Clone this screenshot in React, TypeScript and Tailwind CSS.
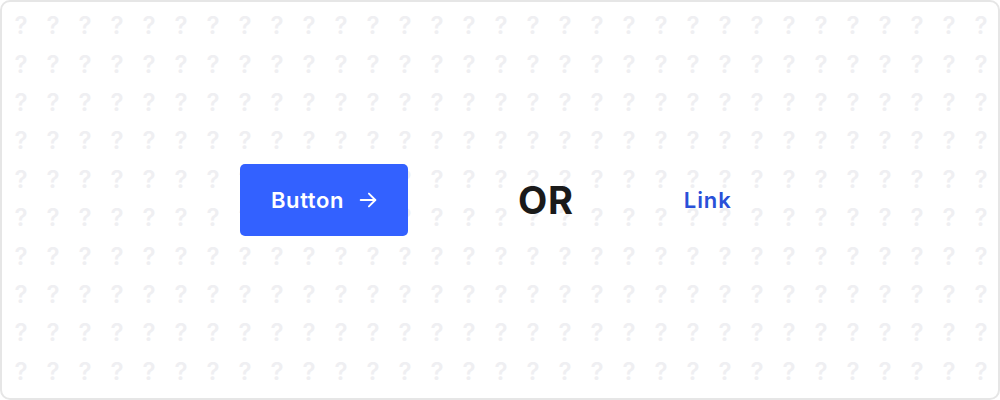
import React from "react";

const rows = Array.from({ length: 10 });
const cols = Array.from({ length: 31 });

export default function App() {
  return (
    <div
      className="w-[1000px] h-[400px] bg-white"
      style={{ fontFamily: "Inter, 'Noto Sans', sans-serif" }}
    >
      <div className="relative w-full h-full border-2 border-[#e6e6e6] rounded-[10px] overflow-hidden">
        <div className="absolute inset-0 flex flex-col pt-[5px] pl-[3px] select-none pointer-events-none">
          {rows.map((_, r) => (
            <div key={r} className="flex h-[38.4px] shrink-0 items-center">
              {cols.map((_, c) => (
                <span
                  key={c}
                  className="w-[32px] shrink-0 text-center text-[24px] font-semibold leading-none text-[#efeff2]"
                >
                  ?
                </span>
              ))}
            </div>
          ))}
        </div>
        <div className="relative flex h-full items-center pl-[238px]">
          <button className="flex h-[72px] w-[168px] items-center justify-center gap-[13px] rounded-[5px] bg-[#3361ff] pl-[2px] text-[22px] font-semibold tracking-[0.6px] text-white">
            <span>Button</span>
            <svg width="22" height="22" viewBox="0 0 24 24" fill="none" stroke="currentColor" strokeWidth="2" strokeLinecap="round" strokeLinejoin="round">
              <path d="M4 12h16" />
              <path d="m13 5 7 7-7 7" />
            </svg>
          </button>
          <span className="ml-[110px] text-[38px] font-bold leading-none tracking-[0.8px] text-[#1a1a1a]">OR</span>
          <span className="ml-[110px] text-[22px] font-semibold tracking-[0.9px] text-[#2a50d8]">Link</span>
        </div>
      </div>
    </div>
  );
}
